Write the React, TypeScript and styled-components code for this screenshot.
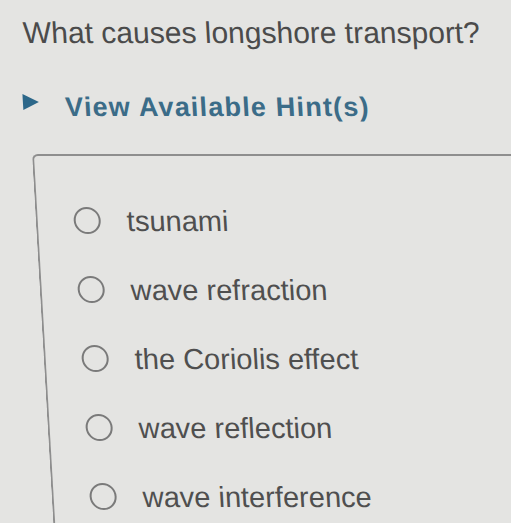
import styled, { createGlobalStyle } from 'styled-components';

const GlobalStyle = createGlobalStyle`
    html, body {
        margin: 0;
        padding: 0;
        background-color: #e4e4e2;
        overflow: hidden;
    }
    body {
        font-family: 'Liberation Sans', Arial, sans-serif;
    }
`;

const Frame = styled.div`
    width: 511px;
    height: 523px;
    overflow: hidden;
`;

// the photo is taken at a slight angle, so the whole sheet leans a little
const Page = styled.div`
    width: 511px;
    height: 523px;
    padding-top: 15px;
    box-sizing: border-box;
    transform: skewX(3.3deg);
    transform-origin: top left;
    display: flex;
    flex-direction: column;
`;

const Question = styled.h2`
    margin: 0 0 0 21px;
    font-size: 30px;
    line-height: 36px;
    font-weight: 400;
    color: #4b4b4b;
    white-space: nowrap;
`;

const HintToggle = styled.div`
    display: flex;
    align-items: center;
    margin: 40px 0 0 17px;
    height: 32px;
    cursor: pointer;
`;

const Arrow = styled.span`
    width: 0;
    height: 0;
    border-top: 8px solid transparent;
    border-bottom: 8px solid transparent;
    border-left: 16px solid #2c6789;
    margin-top: -10px;
`;

const HintLabel = styled.span`
    margin-left: 26px;
    font-size: 27px;
    line-height: 32px;
    font-weight: 700;
    letter-spacing: 1.2px;
    color: #3b6c88;
    white-space: nowrap;
`;

const Choices = styled.div`
    margin: 31px 0 0 23px;
    flex-grow: 1;
    border-top: 2px solid #8e8e8e;
    border-left: 2px solid #8e8e8e;
    border-radius: 6px 0 0 0;
    padding: 30px 0 0 36px;
`;

const Choice = styled.label`
    display: flex;
    align-items: center;
    height: 69px;
`;

const Radio = styled.span`
    width: 27px;
    height: 27px;
    box-sizing: border-box;
    border: 2px solid #7a7a7a;
    border-radius: 50%;
    flex-shrink: 0;
`;

const ChoiceText = styled.span`
    margin-left: 26px;
    font-size: 29px;
    line-height: 34px;
    color: #4f4f4f;
    white-space: nowrap;
`;

const answers = [
    'tsunami',
    'wave refraction',
    'the Coriolis effect',
    'wave reflection',
    'wave interference',
];

function App() {
    return (
        <Frame>
            <GlobalStyle />
            <Page>
                <Question>What causes longshore transport?</Question>
                <HintToggle>
                    <Arrow />
                    <HintLabel>View Available Hint(s)</HintLabel>
                </HintToggle>
                <Choices>
                    {answers.map((a) => (
                        <Choice key={a}>
                            <Radio />
                            <ChoiceText>{a}</ChoiceText>
                        </Choice>
                    ))}
                </Choices>
            </Page>
        </Frame>
    );
}

export default App;
